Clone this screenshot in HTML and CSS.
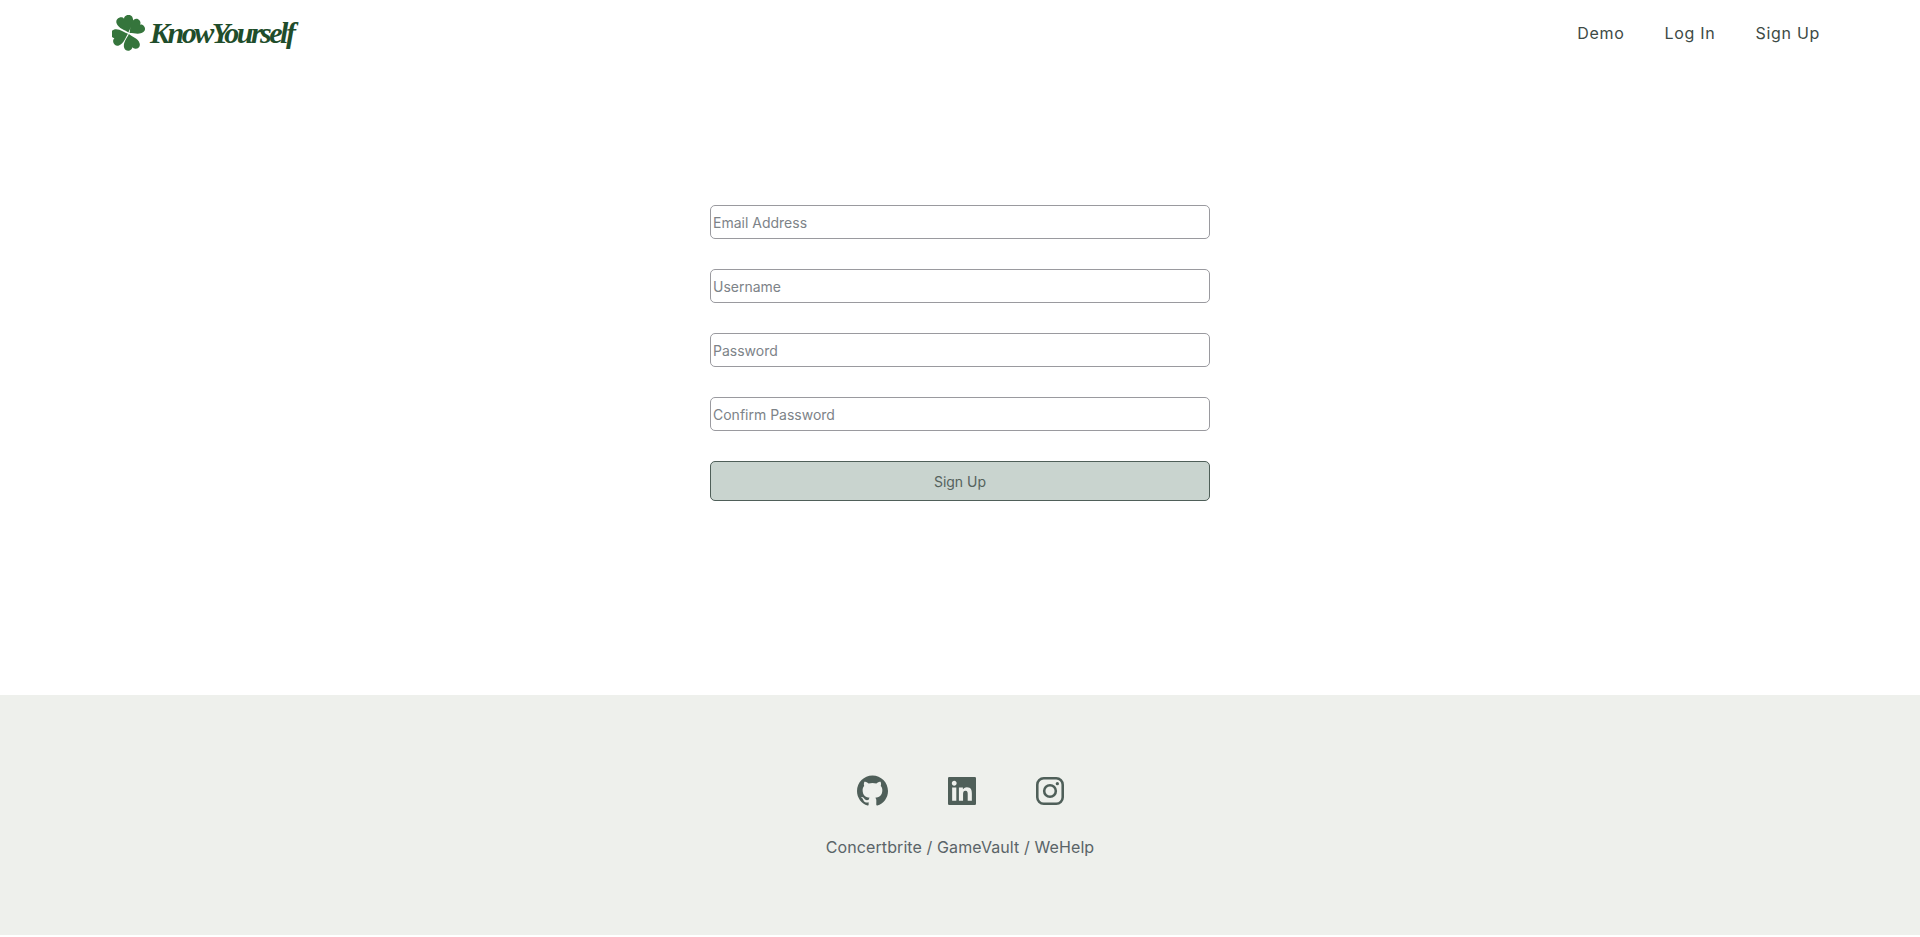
FILE: index.html
```html
<!DOCTYPE html>
<html lang="en">
<head>
  <meta charset="UTF-8">
  <meta name="viewport" content="width=device-width, initial-scale=1.0">
  <title>KnowYourself</title>
  <link rel="stylesheet" href="styles.css">
</head>
<body>
  <nav>
    <a class="logo" href="#">
      <svg class="logo-icon" viewBox="0 0 34 36" aria-hidden="true">
        <defs>
          <path id="leaf" d="M0 0C-2-3-8.500-7-8.500-12.500-8.500-15.500-6.300-17-4.200-17-2-17-.5-16 0-14.500 .5-16 2-17 4.200-17 6.300-17 8.500-15.500 8.500-12.500 8.500-7 2-3 0 0Z"/>
        </defs>
        <g fill="#35753c">
          <use href="#leaf" transform="translate(16.500 17.500) rotate(-18)"/>
          <use href="#leaf" transform="translate(17.500 18) rotate(52) scale(.92)"/>
          <use href="#leaf" transform="translate(16.800 19) rotate(165) scale(.95)"/>
          <use href="#leaf" transform="translate(16 18.800) rotate(252) scale(.98)"/>
        </g>
      </svg>
      <span class="logo-text">KnowYourself</span>
    </a>
    <div class="nav-links">
      <a href="#">Demo</a>
      <a href="#">Log In</a>
      <a href="#">Sign Up</a>
    </div>
  </nav>

  <div class="main-content">
    <form class="signup-form">
      <input type="text" placeholder="Email Address">
      <input type="text" placeholder="Username">
      <input type="password" placeholder="Password">
      <input type="password" placeholder="Confirm Password">
      <button type="button">Sign Up</button>
    </form>
  </div>

  <footer>
    <div class="social-links">
      <a href="#">
        <svg class="icon-github" viewBox="0 0 24 24" aria-hidden="true"><path d="M12 .297c-6.630 0-12 5.373-12 12 0 5.303 3.438 9.800 8.205 11.385.6.113.82-.258.82-.577 0-.285-.01-1.040-.015-2.040-3.338.724-4.042-1.610-4.042-1.610C4.422 18.070 3.633 17.700 3.633 17.700c-1.087-.744.084-.729.084-.729 1.205.084 1.838 1.236 1.838 1.236 1.070 1.835 2.809 1.305 3.495.998.108-.776.417-1.305.76-1.605-2.665-.3-5.466-1.332-5.466-5.930 0-1.310.465-2.380 1.235-3.220-.135-.303-.54-1.523.105-3.176 0 0 1.005-.322 3.300 1.230.96-.267 1.980-.399 3-.405 1.020.006 2.040.138 3 .405 2.280-1.552 3.285-1.230 3.285-1.230.645 1.653.24 2.873.12 3.176.765.84 1.230 1.910 1.230 3.220 0 4.610-2.805 5.625-5.475 5.920.42.36.81 1.096.81 2.220 0 1.606-.015 2.896-.015 3.286 0 .315.21.69.825.57C20.565 22.092 24 17.592 24 12.297c0-6.627-5.373-12-12-12"/></svg>
      </a>
      <a href="#">
        <svg class="icon-square" viewBox="0 0 24 24" aria-hidden="true"><path d="M1 0h22a1 1 0 0 1 1 1v22a1 1 0 0 1-1 1H1a1 1 0 0 1-1-1V1a1 1 0 0 1 1-1zM20.447 20.452v-6.286c0-3.085-.666-5.455-4.267-5.455-1.733 0-2.893.95-3.370 1.850h-.046V9H9.351v11.452h3.554v-5.667c0-1.494.283-2.939 2.136-2.939 1.825 0 1.852 1.709 1.852 3.037v5.569zM5.337 7.433c1.139 0 2.064-.926 2.064-2.065 0-1.138-.924-2.063-2.064-2.063-1.143 0-2.063.925-2.063 2.063 0 1.139.919 2.065 2.063 2.065zm1.782 13.019V9H3.555v11.452z" fill-rule="evenodd"/></svg>
      </a>
      <a href="#">
        <svg class="icon-square" viewBox="0 0 24 24" aria-hidden="true">
          <rect class="line" x="1.100" y="1.100" width="21.800" height="21.800" rx="5.500"/>
          <circle class="line" cx="12" cy="12" r="5"/>
          <circle cx="18.300" cy="5.700" r="1.400"/>
        </svg>
      </a>
    </div>
    <p class="projects">Concertbrite / GameVault / WeHelp</p>
  </footer>
</body>
</html>
```

FILE: styles.css
```css
body {
  margin: 0;
  font-family: 'Inter', 'Open Sans', sans-serif;
  background-color: white;
  color: #4f5f59;
  display: flex;
  flex-direction: column;
  min-height: 100vh;
}

a {
  color: inherit;
  text-decoration: none;
}

nav {
  display: flex;
  justify-content: space-between;
  align-items: center;
  height: 65px;
  padding: 0 100px 0 112px;
}

.logo {
  display: flex;
  align-items: center;
  gap: 4px;
}

.logo-icon {
  width: 34px;
  height: 36px;
}

.logo-text {
  font-family: 'Liberation Serif', serif;
  font-style: italic;
  font-weight: bold;
  font-size: 30px;
  letter-spacing: -2.500px;
  color: #1f4d2b;
}

.nav-links {
  display: flex;
  gap: 40px;
  font-size: 16px;
  letter-spacing: .7px;
  color: #3d4a45;
}

.main-content {
  padding: 140px 0 194px;
}

.signup-form {
  display: flex;
  flex-direction: column;
  gap: 30px;
  width: 500px;
  margin: 0 auto;
}

input {
  height: 34px;
  box-sizing: border-box;
  padding: 1px 2px;
  font-family: inherit;
  font-size: 14px;
  border: 1px solid #9a9a9f;
  border-radius: 5px;
  background-color: white;
}

input::placeholder {
  color: #7d8388;
}

button {
  height: 40px;
  font-family: inherit;
  font-size: 14px;
  color: #55625d;
  background-color: #c9d4cf;
  border: 1px solid #4f5f59;
  border-radius: 5px;
}

footer {
  height: 240px;
  box-sizing: border-box;
  padding-top: 80px;
  background-color: #eef0ec;
}

.social-links {
  display: flex;
  justify-content: center;
  align-items: center;
  gap: 60px;
  height: 31px;
}

.social-links a {
  display: flex;
}

.social-links svg {
  fill: #4f5f59;
}

.social-links .line {
  fill: none;
  stroke: #4f5f59;
  stroke-width: 2.200;
}

.icon-github {
  width: 31px;
  height: 31px;
}

.icon-square {
  width: 28px;
  height: 28px;
}

.projects {
  margin: 31px 0 0;
  text-align: center;
  font-size: 16px;
  letter-spacing: .1px;
  color: #5a6468;
}
```
